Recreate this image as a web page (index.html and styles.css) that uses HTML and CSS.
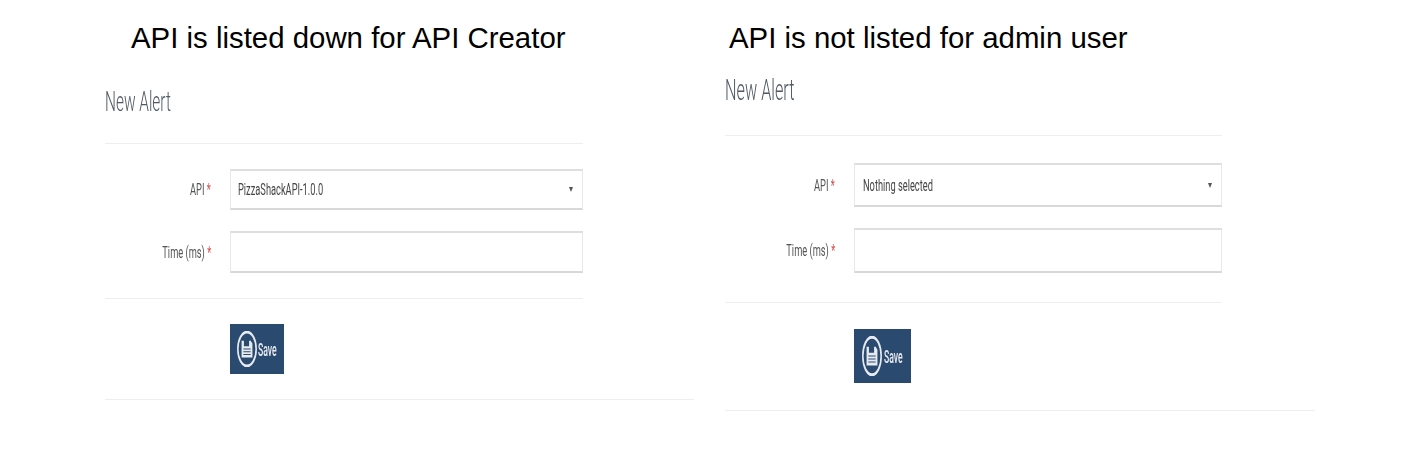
FILE: index.html
```html
<!DOCTYPE html>
<html lang="en">
<head>
  <meta charset="UTF-8">
  <title>New Alert</title>
  <link rel="stylesheet" href="styles.css">
</head>
<body>
  <div class="page">

    <section class="panel panel-creator">
      <h2 class="caption">API is listed down for API Creator</h2>
      <div class="form-area">
        <h3 class="form-title"><span>New Alert</span></h3>
        <div class="form-fields">
          <div class="field field-api">
            <label class="field-label"><span>API <b>*</b></span></label>
            <div class="select-box">
              <span class="select-text">PizzaShackAPI-1.0.0</span>
              <span class="select-arrow"></span>
            </div>
          </div>
          <div class="field field-time">
            <label class="field-label"><span>Time (ms) <b>*</b></span></label>
            <div class="text-box"></div>
          </div>
        </div>
        <div class="form-actions">
          <button class="save-button" type="button">
            <svg class="save-icon" viewBox="0 0 24 24" preserveAspectRatio="none">
              <ellipse cx="12" cy="12" rx="11" ry="11.3" fill="none" stroke="#e6ebf0" stroke-width="1.9"/>
              <path d="M5.5 6.5h2.8v3.6h6.2V6.5h1.9l2.1 1.8v9.4h-13z" fill="#e6ebf0"/>
              <path d="M7.6 12h8.8M7.6 13.8h8.8M7.6 15.6h8.8" stroke="#2b4a70" stroke-width=".7"/>
            </svg>
            <span class="save-text">Save</span>
          </button>
        </div>
      </div>
    </section>

    <section class="panel panel-admin">
      <h2 class="caption">API is not listed for admin user</h2>
      <div class="form-area">
        <h3 class="form-title"><span>New Alert</span></h3>
        <div class="form-fields">
          <div class="field field-api">
            <label class="field-label"><span>API <b>*</b></span></label>
            <div class="select-box">
              <span class="select-text">Nothing selected</span>
              <span class="select-arrow"></span>
            </div>
          </div>
          <div class="field field-time">
            <label class="field-label"><span>Time (ms) <b>*</b></span></label>
            <div class="text-box"></div>
          </div>
        </div>
        <div class="form-actions">
          <button class="save-button" type="button">
            <svg class="save-icon" viewBox="0 0 24 24" preserveAspectRatio="none">
              <ellipse cx="12" cy="12" rx="11" ry="11.3" fill="none" stroke="#e6ebf0" stroke-width="1.9"/>
              <path d="M5.5 6.5h2.8v3.6h6.2V6.5h1.9l2.1 1.8v9.4h-13z" fill="#e6ebf0"/>
              <path d="M7.6 12h8.8M7.6 13.8h8.8M7.6 15.6h8.8" stroke="#2b4a70" stroke-width=".7"/>
            </svg>
            <span class="save-text">Save</span>
          </button>
        </div>
      </div>
    </section>

  </div>
</body>
</html>
```

FILE: styles.css
```css
html, body {
  margin: 0;
  padding: 0;
  background: #fff;
}

body {
  font-family: Roboto, "Liberation Sans", sans-serif;
  width: 1404px;
  height: 460px;
  overflow: hidden;
}

.page {
  display: flex;
  align-items: flex-start;
  padding-left: 105px;
  gap: 30px;
}

.panel {
  width: 590px;
}

/* captions sit over the two pasted screenshots */
.caption {
  margin: 0;
  font-family: "Liberation Sans", Arial, sans-serif;
  font-size: 29.4px;
  font-weight: normal;
  line-height: 32px;
  color: #000;
  padding-top: 22px;
}

.panel-creator .caption {
  padding-left: 26px;
}

.panel-admin .caption {
  padding-left: 4px;
}

.form-area {
  border-bottom: 1px solid #eeeeee;
  color: #555;
}

.form-title {
  margin: 0;
  font-weight: 300;
  font-size: 28px;
  line-height: 32px;
  color: #4f5963;
  border-bottom: 1px solid #eeeeee;
  filter: blur(0.4px);
}

.form-title span {
  display: inline-block;
  transform: scaleX(0.55);
  transform-origin: left center;
  white-space: nowrap;
}

.form-fields {
  border-bottom: 1px solid #eeeeee;
}

.field {
  display: flex;
  align-items: center;
}

.field-label {
  font-size: 16px;
  color: #555;
  text-align: right;
  white-space: nowrap;
  filter: blur(0.4px);
  box-sizing: border-box;
  padding-right: 19px;
}

.field-label span {
  display: inline-block;
  transform: scaleX(0.58);
  transform-origin: right center;
}

.field-label b {
  font-weight: normal;
  color: #d9534f;
}

.select-box,
.text-box {
  box-sizing: border-box;
  background: #fff;
  border: 1px solid #e8e8e8;
  border-top: 2px solid #dedede;
  border-bottom: 2px solid #d8d8d8;
}

.select-box {
  display: flex;
  align-items: center;
  justify-content: space-between;
  padding: 0 9px 0 8px;
}

.select-text {
  display: inline-block;
  font-size: 16px;
  color: #444;
  white-space: nowrap;
  transform: scaleX(0.58);
  transform-origin: left center;
  filter: blur(0.4px);
}

.select-arrow {
  width: 0;
  height: 0;
  border-left: 2.5px solid transparent;
  border-right: 2.5px solid transparent;
  border-top: 5px solid #555;
}

.save-button {
  display: flex;
  align-items: center;
  box-sizing: border-box;
  margin: 0;
  border: 0;
  background: #2b4a70;
  color: #e9edf2;
  padding: 0 0 0 7px;
  font-family: inherit;
}

.save-icon {
  flex: none;
  filter: blur(0.4px);
}

.save-text {
  display: inline-block;
  font-size: 18px;
  font-weight: 500;
  transform: scaleX(0.48);
  transform-origin: left center;
  filter: blur(0.4px);
}

/* left shot */
.panel-creator .form-area {
  width: 589px;
  padding-bottom: 25px;
  margin-top: 32px;
}

.panel-creator .form-title {
  width: 478px;
  padding-bottom: 25px;
}

.panel-creator .form-fields {
  width: 478px;
  padding: 25px 0;
}

.panel-creator .field-label {
  width: 125px;
}

.panel-creator .select-box,
.panel-creator .text-box {
  width: 353px;
  height: 41px;
}

.panel-creator .text-box {
  height: 42px;
}

.panel-creator .select-box {
  padding-left: 7px;
}

.panel-creator .field-api {
  margin-bottom: 21px;
}

.panel-creator .form-actions {
  padding: 25px 0 0 125px;
}

.panel-creator .save-button {
  width: 54px;
  height: 50px;
}

.panel-creator .save-icon {
  width: 20px;
  height: 36px;
}

.panel-creator .save-text {
  margin-left: 1px;
}

/* right shot */
.panel-admin .form-area {
  width: 590px;
  padding-bottom: 27px;
  margin-top: 20px;
}

.panel-admin .form-title {
  width: 497px;
  padding-bottom: 29px;
  font-size: 29px;
}

.panel-admin .form-title span {
  transform: scaleX(0.56);
}

.panel-admin .form-fields {
  width: 497px;
  padding: 27px 0 29px;
}

.panel-admin .field-label {
  width: 129px;
}

.panel-admin .select-box {
  width: 368px;
  height: 44px;
}

.panel-admin .text-box {
  width: 368px;
  height: 45px;
}

.panel-admin .field-api {
  margin-bottom: 21px;
}

.panel-admin .form-actions {
  padding: 26px 0 0 129px;
}

.panel-admin .save-button {
  width: 57px;
  height: 54px;
  padding-left: 8px;
}

.panel-admin .save-icon {
  width: 20px;
  height: 40px;
}

.panel-admin .save-text {
  margin-left: 2px;
}
```
